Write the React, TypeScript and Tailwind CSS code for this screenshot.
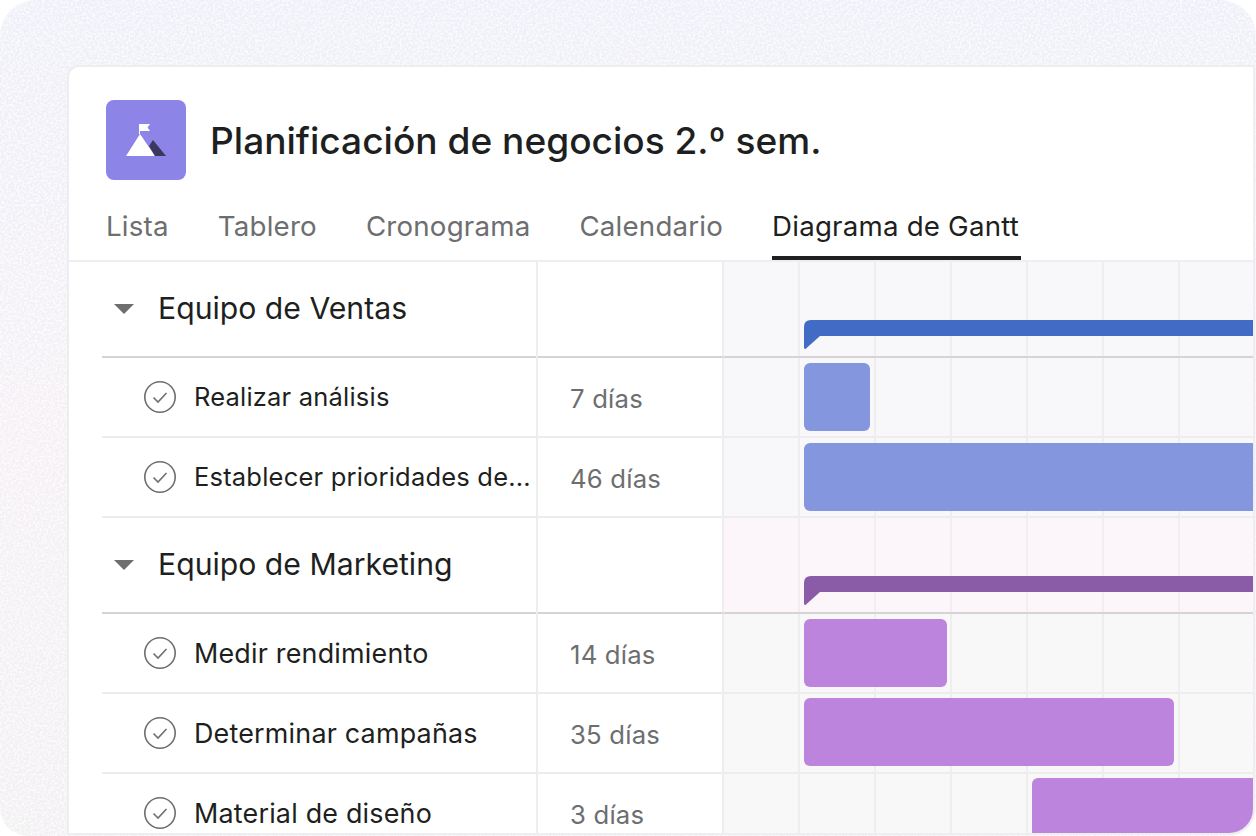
import React from "react";

const GRID_TOP = "bg-[repeating-linear-gradient(90deg,#f8f7f9_0,#f8f7f9_74px,#eeedf0_74px,#eeedf0_76px)]";
const GRID_PINK = "bg-[repeating-linear-gradient(90deg,#fcf6fa_0,#fcf6fa_74px,#f1eef1_74px,#f1eef1_76px)]";
const GRID_BOTTOM = "bg-[repeating-linear-gradient(90deg,#f8f8f8_0,#f8f8f8_74px,#eeeeee_74px,#eeeeee_76px)]";

function Check() {
  return (
    <svg width="34" height="34" viewBox="0 0 34 34" fill="none" className="shrink-0">
      <circle cx="17" cy="17" r="15.2" stroke="#6d6e6f" strokeWidth="1.6" />
      <path d="M10.5 17.5 L15 22 L23.5 13" stroke="#6d6e6f" strokeWidth="1.6" />
    </svg>
  );
}

function Summary({ color }: { color: string }) {
  return (
    <svg width="450" height="30" viewBox="0 0 450 30" className="block">
      <path d="M0 7 Q0 0 7 0 H450 V16 H16 L2 28.5 Q0 30 0 27 Z" fill={color} />
    </svg>
  );
}

function GroupRow({ name, color, grid }: { name: string; color: string; grid: string }) {
  return (
    <div className="flex h-[96px] shrink-0">
      <div className="flex w-[469px] shrink-0 border-r-2 border-[#ededed]">
        <div className="w-[33px] shrink-0" />
        <div className="flex flex-1 items-center border-b-2 border-[#d4d4d4]">
          <svg width="20" height="10" viewBox="0 0 20 10" className="ml-[12px] shrink-0">
            <path d="M0 0 H20 L10 10 Z" fill="#6d6e6f" />
          </svg>
          <span className="ml-[24px] text-[30.2px] text-[#1e1f21]">{name}</span>
        </div>
      </div>
      <div className="w-[186px] shrink-0 border-r-2 border-b-2 border-r-[#ededed] border-b-[#d4d4d4]" />
      <div className={`flex-1 border-b-2 border-[#d4d4d4] pl-[80px] pt-[58px] ${grid}`}>
        <Summary color={color} />
      </div>
    </div>
  );
}

function TaskRow({
  name,
  days,
  grid,
  size,
  children,
  pad = "pt-[5px]",
}: {
  name: string;
  days: string;
  grid: string;
  size: string;
  children: React.ReactNode;
  pad?: string;
}) {
  return (
    <div className="flex h-[80px] shrink-0">
      <div className="flex w-[469px] shrink-0 border-r-2 border-[#ededed]">
        <div className="w-[33px] shrink-0" />
        <div className="flex flex-1 items-center border-b-2 border-[#ededed] pl-[41px]">
          <Check />
          <span className={`ml-[17px] whitespace-nowrap tracking-[0.2px] text-[#1e1f21] ${size}`}>{name}</span>
        </div>
      </div>
      <div className="flex w-[186px] shrink-0 items-center border-r-2 border-b-2 border-[#ededed] pl-[32px] pt-[4px]">
        <span className="text-[25.7px] tracking-[0.2px] text-[#6d6e6f]">{days}</span>
      </div>
      <div className={`min-w-0 flex-1 border-b-2 border-[#ededed] ${pad} ${grid}`}>{children}</div>
    </div>
  );
}

export default function App() {
  const tabs = ["Lista", "Tablero", "Cronograma", "Calendario"];
  return (
    <div className="h-[836px] w-[1256px] overflow-hidden bg-white font-['Inter',sans-serif]">
      <div className="relative flex h-full flex-col overflow-hidden rounded-t-[36px] rounded-b-[28px] bg-gradient-to-b from-[#eeeff8] via-[#f5f0f5] to-[#f2f0f2] pl-[67px] pr-[1px] pb-[1px] pt-[65px]">
        <svg className="absolute inset-0 h-full w-full opacity-70" aria-hidden="true">
          <filter id="grain">
            <feTurbulence type="fractalNoise" baseFrequency="0.45" numOctaves="2" stitchTiles="stitch" />
            <feColorMatrix values="0 0 0 0 1  0 0 0 0 1  0 0 0 0 1  3.4 0 0 0 -1.3" />
          </filter>
          <rect width="100%" height="100%" filter="url(#grain)" />
        </svg>
        <div className="relative flex min-h-0 flex-1 flex-col overflow-hidden rounded-tl-[12px] rounded-br-[26px] border-2 border-[#eeeef0] bg-white">
          <div className="flex h-[113px] shrink-0 items-end pl-[37px]">
            <div className="flex h-[80px] w-[80px] items-center justify-center rounded-[8px] bg-[#8d84e8]">
              <svg width="40" height="34" viewBox="0 0 40 34" className="mt-[-1px]">
                <path d="M13 1 H24 L21.5 4.5 L24 8 H14 V11 H13 Z" fill="#fff" />
                <path d="M0 33 L14 11 L29 33 Z" fill="#fff" />
                <path d="M23 23 L27 17 L40 33 H29 Z" fill="#3b3860" />
              </svg>
            </div>
            <h1 className="mb-[17px] ml-[24px] whitespace-nowrap text-[37.1px] font-[450] leading-[44px] text-[#1e1f21]">
              Planificación de negocios 2.º sem.
            </h1>
          </div>
          <div className="flex h-[82px] shrink-0 items-end border-b-2 border-[#eeeef0] pl-[37px]">
            {tabs.map((t) => (
              <div key={t} className="mr-[49px] h-[54px] text-[27.7px] leading-[40px] tracking-[0.2px] text-[#6d6e6f]">
                {t}
              </div>
            ))}
            <div className="h-[54px] border-b-4 border-[#1e1f21] pr-[2px] text-[27.7px] leading-[40px] tracking-[0.2px] text-[#1e1f21]">
              Diagrama de Gantt
            </div>
          </div>
          <div className="flex min-h-0 flex-1 flex-col overflow-hidden">
            <GroupRow name="Equipo de Ventas" color="#416bc4" grid={GRID_TOP} />
            <TaskRow name="Realizar análisis" days="7 días" grid={GRID_TOP} size="text-[25.5px]">
              <div className="ml-[80px] h-[68px] w-[66px] rounded-[6px] bg-[#8497de]" />
            </TaskRow>
            <TaskRow name="Establecer prioridades de..." days="46 días" grid={GRID_TOP} size="text-[25.5px]">
              <div className="ml-[80px] h-[68px] rounded-l-[6px] bg-[#8497de]" />
            </TaskRow>
            <GroupRow name="Equipo de Marketing" color="#8a5ba6" grid={GRID_PINK} />
            <TaskRow name="Medir rendimiento" days="14 días" grid={GRID_BOTTOM} size="text-[26.9px]">
              <div className="ml-[80px] h-[68px] w-[143px] rounded-[6px] bg-[#bd84dd]" />
            </TaskRow>
            <TaskRow name="Determinar campañas" days="35 días" grid={GRID_BOTTOM} size="text-[26.9px]" pad="pt-[4px]">
              <div className="ml-[80px] h-[68px] w-[370px] rounded-[6px] bg-[#bd84dd]" />
            </TaskRow>
            <TaskRow name="Material de diseño" days="3 días" grid={GRID_BOTTOM} size="text-[26.9px]" pad="pt-[4px]">
              <div className="ml-[308px] h-[68px] rounded-tl-[6px] bg-[#bd84dd]" />
            </TaskRow>
          </div>
        </div>
      </div>
    </div>
  );
}
